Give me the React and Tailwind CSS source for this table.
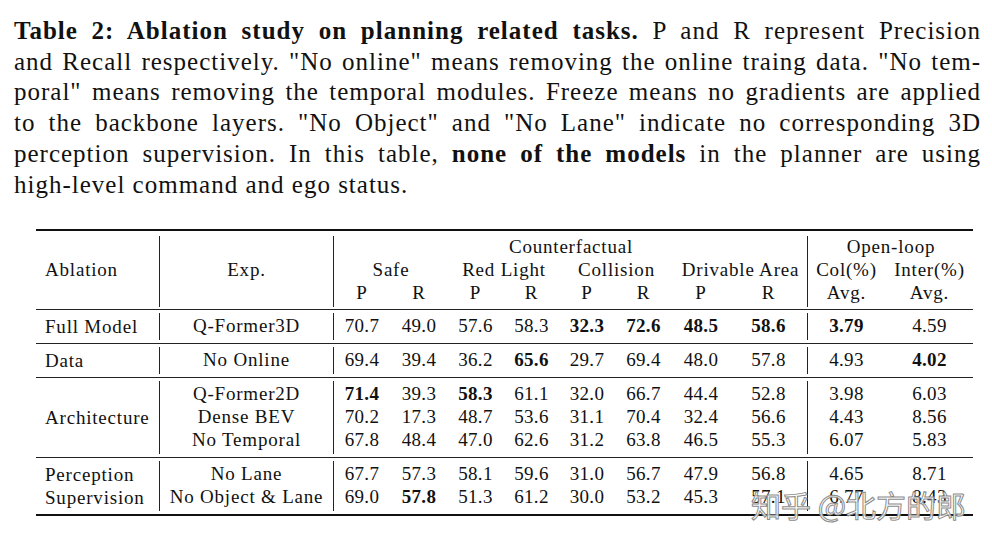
import React from 'react';

const DATA_COLS = 'grid grid-cols-[56px_58px_55px_57px_54px_59px_56px_79px]';
const OPEN_COLS = 'grid grid-cols-[77px_89px]';

const sections = [
  {
    ablation: ['Full Model'],
    rows: [
      { exp: 'Q-Former3D', vals: ['70.7', '49.0', '57.6', '58.3', '*32.3', '*72.6', '*48.5', '*58.6'], open: ['*3.79', '4.59'] },
    ],
  },
  {
    ablation: ['Data'],
    rows: [
      { exp: 'No Online', vals: ['69.4', '39.4', '36.2', '*65.6', '29.7', '69.4', '48.0', '57.8'], open: ['4.93', '*4.02'] },
    ],
  },
  {
    ablation: ['Architecture'],
    rows: [
      { exp: 'Q-Former2D', vals: ['*71.4', '39.3', '*58.3', '61.1', '32.0', '66.7', '44.4', '52.8'], open: ['3.98', '6.03'] },
      { exp: 'Dense BEV', vals: ['70.2', '17.3', '48.7', '53.6', '31.1', '70.4', '32.4', '56.6'], open: ['4.43', '8.56'] },
      { exp: 'No Temporal', vals: ['67.8', '48.4', '47.0', '62.6', '31.2', '63.8', '46.5', '55.3'], open: ['6.07', '5.83'] },
    ],
  },
  {
    ablation: ['Perception', 'Supervision'],
    rows: [
      { exp: 'No Lane', vals: ['67.7', '57.3', '58.1', '59.6', '31.0', '56.7', '47.9', '56.8'], open: ['4.65', '8.71'] },
      { exp: 'No Object & Lane', vals: ['69.0', '*57.8', '51.3', '61.2', '30.0', '53.2', '45.3', '57.1'], open: ['6.77', '8.43'] },
    ],
  },
];

function Num({ v }) {
  const bold = v.startsWith('*');
  return (
    <div className={`h-[23px] flex items-center justify-center tracking-[0.3px] ${bold ? 'font-bold' : ''}`}>
      {bold ? v.slice(1) : v}
    </div>
  );
}

function Cell({ children, className = '' }) {
  return <div className={`h-[23px] flex items-center justify-center whitespace-nowrap ${className}`}>{children}</div>;
}

function HeaderSection() {
  return (
    <div className="flex pt-[5px] pb-[2px] border-b border-[#222]">
      <div className="w-[123px] pl-[9px] flex items-center pb-[2px]">Ablation</div>
      <div className="w-[174px] border-l border-[#222] flex items-center justify-center pb-[2px]">Exp.</div>
      <div className={`w-[474px] border-l border-[#222] pb-[2px] ${DATA_COLS}`}>
        <Cell className="col-span-8">Counterfactual</Cell>
        <Cell className="col-span-2">Safe</Cell>
        <Cell className="col-span-2">Red Light</Cell>
        <Cell className="col-span-2">Collision</Cell>
        <Cell className="col-span-2">Drivable Area</Cell>
        {['P', 'R', 'P', 'R', 'P', 'R', 'P', 'R'].map((l, i) => (
          <Cell key={i}>{l}</Cell>
        ))}
      </div>
      <div className={`w-[166px] border-l border-[#222] pb-[2px] ${OPEN_COLS}`}>
        <Cell className="col-span-2">Open-loop</Cell>
        <Cell>Col(%)</Cell>
        <Cell>Inter(%)</Cell>
        <Cell>Avg.</Cell>
        <Cell>Avg.</Cell>
      </div>
    </div>
  );
}

function BodySection({ section, last }) {
  return (
    <div className={`flex py-[3px] ${last ? '' : 'border-b border-[#222]'}`}>
      <div className="w-[123px] pl-[9px] py-[2px] flex flex-col justify-center">
        {section.ablation.map((a) => (
          <div key={a} className="h-[23px] leading-[23px] whitespace-nowrap">{a}</div>
        ))}
      </div>
      <div className="w-[174px] border-l border-[#222] py-[2px]">
        {section.rows.map((r) => (
          <Cell key={r.exp}>{r.exp}</Cell>
        ))}
      </div>
      <div className={`w-[474px] border-l border-[#222] py-[2px] ${DATA_COLS}`}>
        {section.rows.map((r) => r.vals.map((v, i) => <Num key={r.exp + i} v={v} />))}
      </div>
      <div className={`w-[166px] border-l border-[#222] py-[2px] ${OPEN_COLS}`}>
        {section.rows.map((r) => r.open.map((v, i) => <Num key={r.exp + 'o' + i} v={v} />))}
      </div>
    </div>
  );
}

const captionLines = [
  <>
    <b>Table 2: Ablation study on planning related tasks.</b> P and R represent Precision
  </>,
  <>and Recall respectively. "No online" means removing the online traing data. "No tem-</>,
  <>poral" means removing the temporal modules. Freeze means no gradients are applied</>,
  <>to the backbone layers. "No Object" and "No Lane" indicate no corresponding 3D</>,
  <>
    perception supervision. In this table, <b>none of the models</b> in the planner are using
  </>,
];

export default function App() {
  return (
    <div className="relative w-[992px] h-[546px] bg-white text-[#111] overflow-hidden font-['Liberation_Serif',serif]">
      <div className="ml-[14px] w-[967px] pt-[16px] text-[25px] leading-[30.7px] tracking-[1px]">
        {captionLines.map((line, i) => (
          <div key={i} className="text-justify [text-align-last:justify] whitespace-nowrap">
            {line}
          </div>
        ))}
        <div className="whitespace-nowrap">high-level command and ego status.</div>
      </div>

      <div className="ml-[36px] mt-[29px] w-[937px] border-t-2 border-b-2 border-[#111] text-[19px] tracking-[0.8px]">
        <HeaderSection />
        {sections.map((s, i) => (
          <BodySection key={i} section={s} last={i === sections.length - 1} />
        ))}
      </div>

      <div className="absolute left-[751px] top-[486px] text-[30px] leading-[36px] whitespace-nowrap text-white/85 font-['Noto_Sans_CJK_SC',sans-serif] [-webkit-text-stroke:1px_#8c8c8c]">
        知乎 @北方的郎
      </div>
    </div>
  );
}
